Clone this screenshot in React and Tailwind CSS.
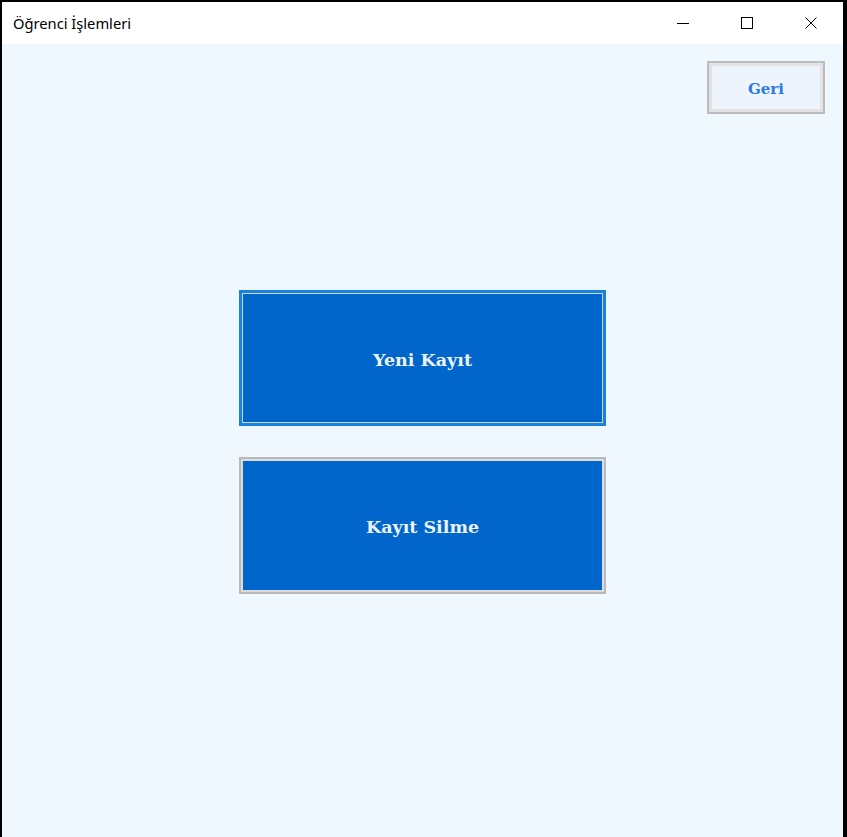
import React from 'react';

function TitleBar() {
  return (
    <div className="h-[42px] bg-white flex items-center justify-between">
      <span className="pl-[11px] pt-[1px] text-[14.7px] text-black font-['Noto_Sans',sans-serif]">
        Öğrenci İşlemleri
      </span>
      <div className="flex h-full">
        {/* minimize */}
        <div className="w-[64px] h-full flex items-center justify-center">
          <svg width="12" height="12" viewBox="0 0 12 12">
            <line x1="0" y1="6.5" x2="12" y2="6.5" stroke="black" strokeWidth="1" />
          </svg>
        </div>
        {/* maximize */}
        <div className="w-[64px] h-full flex items-center justify-center">
          <svg width="12" height="12" viewBox="0 0 12 12">
            <rect x="0.5" y="0.5" width="11" height="11" fill="none" stroke="black" strokeWidth="1" />
          </svg>
        </div>
        {/* close */}
        <div className="w-[64px] h-full flex items-center justify-center">
          <svg width="12" height="12" viewBox="0 0 12 12">
            <path d="M0.5 0.5 L11.5 11.5 M11.5 0.5 L0.5 11.5" stroke="black" strokeWidth="1" />
          </svg>
        </div>
      </div>
    </div>
  );
}

export default function App() {
  return (
    <div className="w-[847px] h-[837px] bg-black pl-[2px] pt-[2px] pr-[4px] flex flex-col font-['DejaVu_Serif',serif]">
      <TitleBar />

      <div className="flex-1 bg-[#eff7ff] flex flex-col">
        {/* Back button */}
        <div className="flex justify-end pt-[17px] pr-[18px]">
          <button className="w-[118px] h-[53px] pt-[3px] border-2 border-[#bcbcbc] bg-[#eef4fb] shadow-[inset_0_0_0_3px_#e2e2e2] text-[#2a7de0] font-bold text-[15px]">
            Geri
          </button>
        </div>

        {/* Main actions */}
        <div className="flex flex-col items-center pt-[176px] gap-[31px]">
          <button className="w-[367px] h-[136px] pt-[4px] border-[3px] border-[#1683e0] bg-[#0066cc] shadow-[inset_0_0_0_1px_#cfd6de,inset_0_0_0_2px_#0066cc] text-[#edf3fb] font-bold text-[17.5px]">
            Yeni Kayıt
          </button>
          <button className="w-[367px] h-[137px] pt-[4px] border-2 border-[#b9b9b9] bg-[#0066cc] shadow-[inset_0_0_0_2px_#dcdcdc] text-[#edf3fb] font-bold text-[17.5px]">
            Kayıt Silme
          </button>
        </div>
      </div>
    </div>
  );
}
